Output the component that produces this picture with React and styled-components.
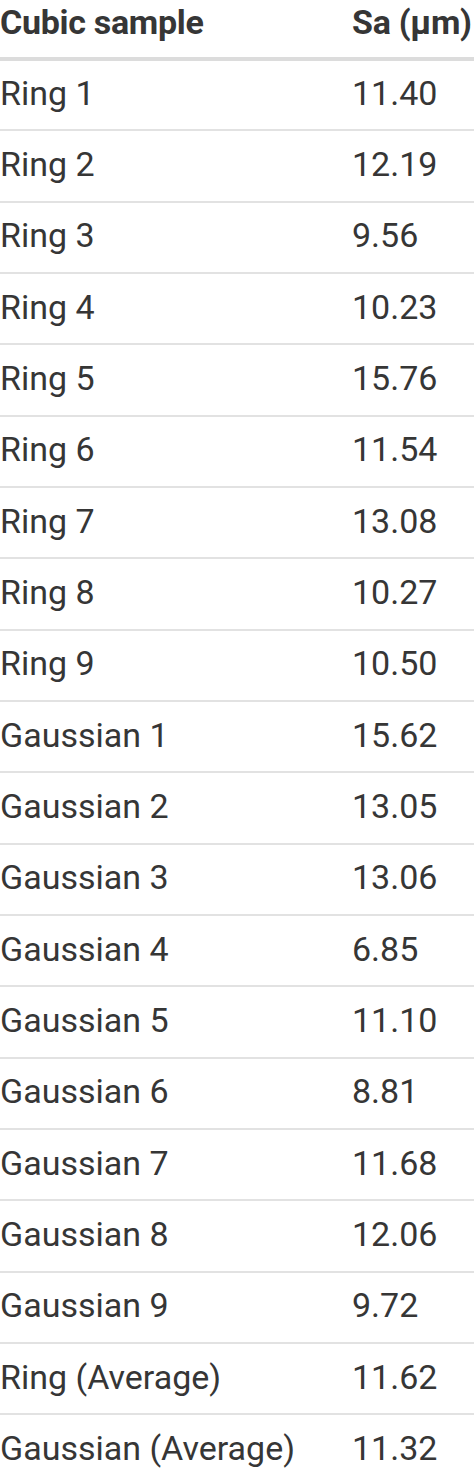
import styled, { createGlobalStyle } from 'styled-components'

const GlobalStyle = createGlobalStyle`
  body {
    margin: 0;
    background: #ffffff;
    font-family: Roboto, "Liberation Sans", sans-serif;
    overflow: hidden;
  }
`

const Table = styled.table`
  width: 474px;
  border-collapse: collapse;
  color: #363636;
  font-size: 34px;
  table-layout: fixed;
`

const HeadCell = styled.th`
  height: 59px;
  padding: 0 0 14px 0;
  box-sizing: border-box;
  text-align: left;
  font-weight: 700;
  letter-spacing: -0.3px;
  white-space: nowrap;
  overflow: hidden;
  border-bottom: 4px solid #dcdcdc;
  width: ${(p) => p.$width};
`

const Row = styled.tr`
  border-bottom: 2px solid #e2e2e2;
`

const Cell = styled.td`
  height: 71.33px;
  padding: 0 0 4px 0;
  box-sizing: border-box;
  font-weight: 400;
  white-space: nowrap;
`

const rows = [
  ['Ring 1', '11.40'],
  ['Ring 2', '12.19'],
  ['Ring 3', '9.56'],
  ['Ring 4', '10.23'],
  ['Ring 5', '15.76'],
  ['Ring 6', '11.54'],
  ['Ring 7', '13.08'],
  ['Ring 8', '10.27'],
  ['Ring 9', '10.50'],
  ['Gaussian 1', '15.62'],
  ['Gaussian 2', '13.05'],
  ['Gaussian 3', '13.06'],
  ['Gaussian 4', '6.85'],
  ['Gaussian 5', '11.10'],
  ['Gaussian 6', '8.81'],
  ['Gaussian 7', '11.68'],
  ['Gaussian 8', '12.06'],
  ['Gaussian 9', '9.72'],
  ['Ring (Average)', '11.62'],
  ['Gaussian (Average)', '11.32'],
]

export default function App() {
  return (
    <>
      <GlobalStyle />
      <Table>
        <thead>
          <tr>
            <HeadCell $width="352px">Cubic sample</HeadCell>
            <HeadCell $width="122px">Sa (µm)</HeadCell>
          </tr>
        </thead>
        <tbody>
          {rows.map(([name, value]) => (
            <Row key={name}>
              <Cell>{name}</Cell>
              <Cell>{value}</Cell>
            </Row>
          ))}
        </tbody>
      </Table>
    </>
  )
}
